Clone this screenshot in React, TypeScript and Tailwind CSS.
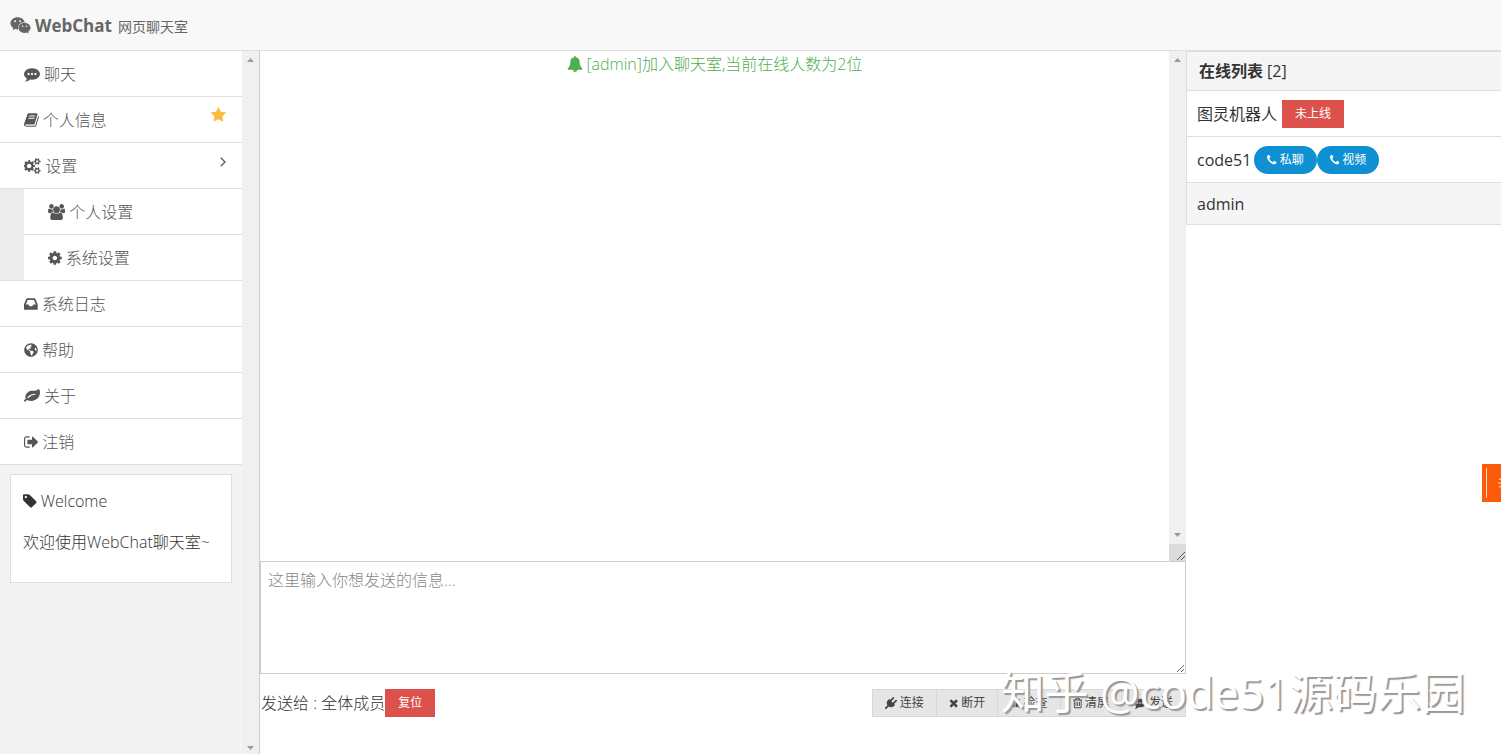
import type { ReactNode } from 'react'
import { FaWeixin, FaGlobeAmericas } from 'react-icons/fa'

type IconName =
  | 'commenting' | 'book' | 'star' | 'cogs' | 'users' | 'cog' | 'inbox' | 'leaf'
  | 'signOut' | 'tag' | 'bell' | 'phone' | 'plug' | 'times' | 'trash' | 'bug'

// [viewBox x, viewBox width, path], all on a 1792 high grid
const icons: Record<IconName, [number, number, string]> = {
  commenting: [0, 1792, 'M640 896q0-53-37.5-90.5t-90.5-37.5-90.5 37.5-37.5 90.5 37.5 90.5 90.5 37.5 90.5-37.5 37.5-90.5zm384 0q0-53-37.5-90.5t-90.5-37.5-90.5 37.5-37.5 90.5 37.5 90.5 90.5 37.5 90.5-37.5 37.5-90.5zm384 0q0-53-37.5-90.5t-90.5-37.5-90.5 37.5-37.5 90.5 37.5 90.5 90.5 37.5 90.5-37.5 37.5-90.5zm384 0q0 174-120 321.5t-326 233-450 85.5q-110 0-211-18-173 173-435 229-52 10-86 13-12 1-22-6t-13-18q-4-15 20-37 5-5 23.5-21.5t25.5-23.5 23.5-25.5 24-31.5 20.5-37 20-48 14.5-57.5 12.5-72.5q-146-90-229.5-216.5t-83.5-269.5q0-174 120-321.5t326-233 450-85.5 450 85.5 326 233 120 321.5z'],
  book: [64, 1664, 'M1703 478q40 57 18 129l-275 906q-19 64-76.5 107.5t-122.5 43.5h-923q-77 0-148.5-53.5t-99.5-131.5q-24-67-2-127 0-4 3-27t4-37q1-8-3-21.5t-3-19.5q2-11 8-21t16.5-23.5 16.5-23.5q23-38 45-91.5t30-91.5q3-10 .5-30t-.5-28q3-11 17-28t17-23q21-36 42-92t25-90q1-9-2.5-32t.5-28q4-13 22-30.5t22-22.5q19-26 42.5-84.5t27.5-96.5q1-8-3-25.5t-2-26.5q2-8 9-18t18-23 17-21q8-12 16.5-30.5t15-35 16-36 19.5-32 26.5-23.5 36-11.5 47.5 5.5l-1 3q38-9 51-9h761q74 0 114 56t18 130l-274 906q-36 119-71.5 153.5t-128.5 34.5h-869q-27 0-38 15-11 16-1 43 24 70 144 70h923q29 0 56-15.5t35-41.5l300-987q7-22 5-57 38 15 59 43zm-1064 2q-4 13 2 22.5t20 9.5h608q13 0 25.5-9.5t16.5-22.5l21-64q4-13-2-22.5t-20-9.5h-608q-13 0-25.5 9.5t-16.5 22.5zm-83 256q-4 13 2 22.5t20 9.5h608q13 0 25.5-9.5t16.5-22.5l21-64q4-13-2-22.5t-20-9.5h-608q-13 0-25.5 9.5t-16.5 22.5z'],
  star: [64, 1664, 'M1728 647q0 22-26 48l-363 354 86 500q1 7 1 20 0 21-10.5 35.5t-30.5 14.5q-19 0-40-12l-449-236-449 236q-22 12-40 12-21 0-31.5-14.5t-10.5-35.5q0-6 2-20l86-500-364-354q-25-27-25-48 0-37 56-46l502-73 225-455q19-41 49-41t49 41l225 455 502 73q56 9 56 46z'],
  cogs: [0, 1920, 'M832 896q0-106-75-181t-181-75-181 75-75 181 75 181 181 75 181-75 75-181zm768 512q0-52-38-90t-90-38-90 38-38 90q0 53 37.5 90.5t90.5 37.5 90.5-37.5 37.5-90.5zm0-1024q0-52-38-90t-90-38-90 38-38 90q0 53 37.5 90.5t90.5 37.5 90.5-37.5 37.5-90.5zm-384 421v185q0 10-7 19.5t-16 10.5l-155 24q-11 35-32 76 34 48 90 115 7 11 7 20 0 12-7 19-23 30-82.5 89.5t-78.5 59.5q-11 0-21-7l-115-90q-37 19-77 31-11 108-23 155-7 24-30 24h-186q-11 0-20-7.5t-10-17.5l-23-153q-34-10-75-31l-118 89q-7 7-20 7-11 0-21-8-144-133-144-160 0-9 7-19 10-14 41-53t47-61q-23-44-35-82l-152-24q-10-1-17-9.5t-7-19.5v-185q0-10 7-19.5t16-10.5l155-24q11-35 32-76-34-48-90-115-7-11-7-20 0-12 7-20 22-30 82-89t79-59q11 0 21 7l115 90q34-18 77-32 11-108 23-154 7-24 30-24h186q11 0 20 7.5t10 17.5l23 153q34 10 75 31l118-89q8-7 20-7 11 0 21 8 144 133 144 160 0 8-7 19-12 16-42 54t-45 60q23 48 34 82l152 23q10 2 17 10.5t7 19.5zm640 533v140q0 16-149 31-12 27-30 52 51 113 51 138 0 4-4 7-122 71-124 71-8 0-46-47t-52-68q-20 2-30 2t-30-2q-14 21-52 68t-46 47q-2 0-124-71-4-3-4-7 0-25 51-138-18-25-30-52-149-15-149-31v-140q0-16 149-31 13-29 30-52-51-113-51-138 0-4 4-7 4-2 35-20t59-34 30-16q8 0 46 46.5t52 67.5q20-2 30-2t30 2q51-71 92-112l6-2q4 0 124 70 4 3 4 7 0 25-51 138 17 23 30 52 149 15 149 31zm0-1024v140q0 16-149 31-12 27-30 52 51 113 51 138 0 4-4 7-122 71-124 71-8 0-46-47t-52-68q-20 2-30 2t-30-2q-14 21-52 68t-46 47q-2 0-124-71-4-3-4-7 0-25 51-138-18-25-30-52-149-15-149-31v-140q0-16 149-31 13-29 30-52-51-113-51-138 0-4 4-7 4-2 35-20t59-34 30-16q8 0 46 46.5t52 67.5q20-2 30-2t30 2q51-71 92-112l6-2q4 0 124 70 4 3 4 7 0 25-51 138 17 23 30 52 149 15 149 31z'],
  users: [-64, 1920, 'M529 896q-162 5-265 128h-134q-82 0-138-40.5t-56-118.5q0-353 124-353 6 0 43.5 21t97.5 42.5 119 21.5q67 0 133-23-5 37-5 66 0 139 81 256zm1071 637q0 120-73 189.5t-194 69.5h-874q-121 0-194-69.5t-73-189.5q0-53 3.5-103.5t14-109 26.5-108.5 43-97.5 62-81 85.5-53.5 111.5-20q10 0 43 21.5t73 48 107 48 135 21.5 135-21.5 107-48 73-48 43-21.5q61 0 111.5 20t85.5 53.5 62 81 43 97.5 26.5 108.5 14 109 3.5 103.5zm-1024-1277q0 106-75 181t-181 75-181-75-75-181 75-181 181-75 181 75 75 181zm704 384q0 159-112.5 271.5t-271.5 112.5-271.5-112.5-112.5-271.5 112.5-271.5 271.5-112.5 271.5 112.5 112.5 271.5zm576 225q0 78-56 118.5t-138 40.5h-134q-103-123-265-128 81-117 81-256 0-29-5-66 66 23 133 23 59 0 119-21.5t97.5-42.5 43.5-21q124 0 124 353zm-128-609q0 106-75 181t-181 75-181-75-75-181 75-181 181-75 181 75 75 181z'],
  cog: [128, 1536, 'M1152 896q0-106-75-181t-181-75-181 75-75 181 75 181 181 75 181-75 75-181zm512-109v222q0 12-8 23t-20 13l-185 28q-19 54-39 91 35 50 107 138 10 12 10 25t-9 23q-27 37-99 108t-94 71q-12 0-26-9l-138-108q-44 23-91 38-16 136-29 186-7 28-36 28h-222q-14 0-24.5-8.5t-11.5-21.5l-28-184q-49-16-90-37l-141 107q-10 9-25 9-14 0-25-11-126-114-165-168-7-10-7-23 0-12 8-23 15-21 51-66.5t54-70.5q-27-50-41-99l-183-27q-13-2-21-12.5t-8-23.5v-222q0-12 8-23t19-13l186-28q14-46 39-92-40-57-107-138-10-12-10-24 0-10 9-23 26-36 98.5-107.5t94.5-71.5q13 0 26 10l138 107q44-23 91-38 16-136 29-186 7-28 36-28h222q14 0 24.5 8.5t11.5 21.5l28 184q49 16 90 37l142-107q9-9 24-9 13 0 25 10 129 119 165 170 7 8 7 22 0 12-8 23-15 21-51 66.5t-54 70.5q26 50 41 98l183 28q13 2 21 12.5t8 23.5z'],
  inbox: [128, 1536, 'M1151 960h316q-1-3-2.5-8t-2.5-8l-212-496h-708l-212 496q-1 2-2.5 8t-2.5 8h316l95 192h320zm513 30v482q0 26-19 45t-45 19h-1408q-26 0-45-19t-19-45v-482q0-62 25-123l238-552q10-25 36.5-42t52.5-17h832q26 0 52.5 17t36.5 42l238 552q25 61 25 123z'],
  leaf: [0, 1792, 'M1280 704q0-26-19-45t-45-19q-172 0-318 49.5t-259.5 134-235.5 219.5q-19 21-19 45 0 26 19 45t45 19q24 0 45-19 27-24 74-71t67-66q137-124 268.5-176t313.5-52q26 0 45-19t19-45zm512-198q0 95-20 193-46 224-184.5 383t-357.5 268q-214 108-438 108-148 0-286-47-15-5-88-42t-96-37q-16 0-39.5 32t-45 70-52.5 70-60 32q-43 0-63.5-17.5t-45.5-59.5q-2-4-6-11t-5.5-10-3-9.5-1.5-13.5q0-35 31-73.5t68-65.5 68-56 31-48q0-4-14-38t-16-44q-9-51-9-104 0-115 43.5-220t119-184.5 170.5-139 204-95.5q55-18 145-25.5t179.5-9 178.5-6 163.5-24 113.5-56.5l29.5-29.5 29.5-28 27-20 36.5-16 43.5-4.5q39 0 70.5 46t47.5 112 24 124 8 96z'],
  signOut: [64, 1600, 'M704 1440q0 4 1 20t.5 26.5-3 23.5-10 19.5-20.5 6.5h-320q-119 0-203.5-84.5t-84.5-203.5v-704q0-119 84.5-203.5t203.5-84.5h320q13 0 22.5 9.5t9.5 22.5q0 4 1 20t.5 26.5-3 23.5-10 19.5-20.5 6.5h-320q-66 0-113 47t-47 113v704q0 66 47 113t113 47h312l11.5 1 11.5 3 8 5.5 7 9 2 13.5zm928-544q0 26-19 45l-544 544q-19 19-45 19t-45-19-19-45v-288h-448q-26 0-45-19t-19-45v-384q0-26 19-45t45-19h448v-288q0-26 19-45t45-19 45 19l544 544q19 19 19 45z'],
  tag: [128, 1536, 'M576 448q0-53-37.5-90.5t-90.5-37.5-90.5 37.5-37.5 90.5 37.5 90.5 90.5 37.5 90.5-37.5 37.5-90.5zm1067 576q0 53-37 90l-491 492q-39 37-91 37-53 0-90-37l-715-716q-38-37-64.5-101t-26.5-117v-416q0-52 38-90t90-38h416q53 0 117 26.5t102 64.5l715 714q37 39 37 91z'],
  bell: [0, 1792, 'M912 1696q0-16-16-16-59 0-101.5-42.5t-42.5-101.5q0-16-16-16t-16 16q0 73 51.5 124.5t124.5 51.5q16 0 16-16zm816-288q0 52-38 90t-90 38h-448q0 106-75 181t-181 75-181-75-75-181h-448q-52 0-90-38t-38-90q50-42 91-88t85-119.5 74.5-158.5 50-206 19.5-260q0-152 117-282.5t307-158.5q-8-19-8-39 0-40 28-68t68-28 68 28 28 68q0 20-8 39 190 28 307 158.5t117 282.5q0 139 19.5 260t50 206 74.5 158.5 85 119.5 91 88z'],
  phone: [192, 1408, 'M1600 1240q0 27-10 70.5t-21 68.5q-21 50-122 106-94 51-186 51-27 0-52.5-3.5t-57.5-12.5-47.5-14.5-55.5-20.5-49-18q-98-35-175-83-128-79-264.5-215.5t-215.5-264.5q-48-77-83-175-3-9-18-49t-20.5-55.5-14.5-47.5-12.5-57.5-3.5-52.5q0-92 51-186 56-101 106-122 25-11 68.5-21t70.5-10q14 0 21 3 18 6 53 76 11 19 30 54t35 63.5 31 53.5q3 4 17.5 25t21.5 35.5 7 28.5q0 20-28.5 50t-62 55-62 53-28.5 46q0 9 5 22.5t8.5 20.5 14 24 11.5 19q76 137 174 235t235 174q2 1 19 11.5t24 14 20.5 8.5 22.5 5q18 0 46-28.5t53-62 55-62 50-28.5q14 0 28.5 7t35.5 21.5 25 17.5q25 15 53.5 31t63.5 35 54 30q70 35 76 53 3 7 3 21z'],
  plug: [0, 1792, 'M1755 453q37 38 37 90.5t-37 90.5l-401 400 150 150-160 160q-163 163-389.5 186.5t-411.5-100.5l-362 362h-181v-181l362-362q-124-185-100.5-411.5t186.5-389.5l160-160 150 150 400-401q38-37 91-37t90 37 37 90.5-37 90.5l-400 401 234 234 401-400q38-37 91-37t90 37z'],
  times: [192, 1408, 'M1490 1322q0 40-28 68l-136 136q-28 28-68 28t-68-28l-294-294-294 294q-28 28-68 28t-68-28l-136-136q-28-28-28-68t28-68l294-294-294-294q-28-28-28-68t28-68l136-136q28-28 68-28t68 28l294 294 294-294q28-28 68-28t68 28l136 136q28 28 28 68t-28 68l-294 294 294 294q28 28 28 68z'],
  trash: [192, 1408, 'M704 736v576q0 14-9 23t-23 9h-64q-14 0-23-9t-9-23v-576q0-14 9-23t23-9h64q14 0 23 9t9 23zm256 0v576q0 14-9 23t-23 9h-64q-14 0-23-9t-9-23v-576q0-14 9-23t23-9h64q14 0 23 9t9 23zm256 0v576q0 14-9 23t-23 9h-64q-14 0-23-9t-9-23v-576q0-14 9-23t23-9h64q14 0 23 9t9 23zm128 724v-948h-896v948q0 22 7 40.5t14.5 27 10.5 8.5h832q3 0 10.5-8.5t14.5-27 7-40.5zm-672-1076h448l-48-117q-7-9-17-11h-317q-10 2-17 11zm928 32v64q0 14-9 23t-23 9h-96v948q0 83-47 143.5t-113 60.5h-832q-66 0-113-58.5t-47-141.5v-952h-96q-14 0-23-9t-9-23v-64q0-14 9-23t23-9h309l70-167q15-37 54-63t79-26h320q40 0 79 26t54 63l70 167h309q14 0 23 9t9 23z'],
  bug: [128, 1536, 'M1696 960q0 26-19 45t-45 19h-224q0 171-67 290l208 209q19 19 19 45t-19 45q-18 19-45 19t-45-19l-198-197q-5 5-15 13t-42 28.5-65 36.5-82 29-97 13v-896h-128v896q-51 0-101.5-13.5t-87-33-66-39-43.5-32.5l-15-14-183 207q-20 21-48 21-24 0-43-16-19-18-20.5-44.5t15.5-46.5l202-227q-58-114-58-274h-224q-26 0-45-19t-19-45 19-45 45-19h224v-294l-173-173q-19-19-19-45t19-45 45-19 45 19l173 173h844l173-173q19-19 45-19t45 19 19 45-19 45l-173 173v294h224q26 0 45 19t19 45zm-480-576h-640q0-133 93.5-226.5t226.5-93.5 226.5 93.5 93.5 226.5z'],
}

function Icon({ name, className = 'h-4' }: { name: IconName; className?: string }) {
  const [x, width, d] = icons[name]
  return (
    <svg viewBox={`${x} 0 ${width} 1792`} className={`w-auto flex-shrink-0 ${className}`} fill="currentColor" aria-hidden="true">
      <path d={d} />
    </svg>
  )
}

function Arrow({ down = false }: { down?: boolean }) {
  return (
    <svg viewBox="0 0 7 4" className="w-[7px] h-1 text-[#9b9b9b]" fill="currentColor" aria-hidden="true">
      <path d={down ? 'M0 0h7L3.5 4z' : 'M0 4h7L3.5 0z'} />
    </svg>
  )
}

function ScrollTrack({ className }: { className: string }) {
  return (
    <div className={`flex w-[17px] flex-1 flex-col items-center justify-between bg-[#f0f0f0] ${className}`}>
      <Arrow />
      <Arrow down />
    </div>
  )
}

function NavItem({ icon, label, extra }: { icon: ReactNode; label: string; extra?: ReactNode }) {
  return (
    <li className="border-b border-[#dedede] bg-white">
      <a href="#" className="flex h-[45px] items-center gap-1 pl-6 pr-4 text-[#555]">
        {icon}
        <span>{label}</span>
        {extra}
      </a>
    </li>
  )
}

const actions: { icon: IconName; label: string }[] = [
  { icon: 'plug', label: '连接' },
  { icon: 'times', label: '断开' },
  { icon: 'bug', label: '检查' },
  { icon: 'trash', label: '清屏' },
  { icon: 'commenting', label: '发送' },
]

export default function App() {
  return (
    <div className="relative flex h-screen flex-col overflow-hidden bg-white font-['Open_Sans','Noto_Sans_CJK_SC',sans-serif] text-base font-light text-[#333]">
      <header className="flex h-[51px] flex-shrink-0 items-center border-b border-[#dedede] bg-[#f8f8f8] px-[10px] text-[#666]">
        <FaWeixin className="mr-1 h-[21px] w-[21px]" />
        <h1 className="flex items-baseline gap-[6px] pt-px">
          <strong className="text-[17px] font-bold">WebChat</strong>
          <small className="text-sm font-normal">网页聊天室</small>
        </h1>
      </header>

      <div className="flex min-h-0 flex-1">
        <aside className="flex w-[260px] flex-shrink-0 border-r border-[#ccc] bg-[#f3f3f3]">
          <div className="flex-1">
            <nav>
              <ul>
                <NavItem icon={<Icon name="commenting" />} label="聊天" />
                <NavItem icon={<Icon name="book" />} label="个人信息" extra={<Icon name="star" className="ml-auto mb-[10px] h-4 text-[#fbbd3c]" />} />
                <NavItem
                  icon={<Icon name="cogs" />}
                  label="设置"
                  extra={
                    <svg viewBox="0 0 6 10" className="ml-auto mb-2 h-[10px] w-[6px]" fill="none" stroke="currentColor" strokeWidth="1.3" aria-hidden="true">
                      <path d="M.8.8 5 5 .8 9.2" />
                    </svg>
                  }
                />
                <li className="border-b border-[#dedede] bg-[#ececec] pl-6">
                  <ul className="-mb-px">
                    <NavItem icon={<Icon name="users" />} label="个人设置" />
                    <NavItem icon={<Icon name="cog" />} label="系统设置" />
                  </ul>
                </li>
                <NavItem icon={<Icon name="inbox" />} label="系统日志" />
                <NavItem icon={<FaGlobeAmericas className="h-[14px] w-[14px]" />} label="帮助" />
                <NavItem icon={<Icon name="leaf" />} label="关于" />
                <NavItem icon={<Icon name="signOut" />} label="注销" />
              </ul>
            </nav>
            <section className="m-[10px] mt-[9px] h-[109px] border border-[#dedede] bg-white px-3 pt-[14px]">
              <p className="flex items-center gap-1">
                <Icon name="tag" />
                Welcome
              </p>
              <p className="mt-[17px]">欢迎使用WebChat聊天室~</p>
            </section>
          </div>
          <div className="flex flex-col">
            <ScrollTrack className="pt-[7px] pb-1" />
          </div>
        </aside>

        <main className="flex min-w-0 flex-1 flex-col">
          <div className="flex min-h-0 flex-1">
            <p className="flex flex-1 items-center justify-center gap-1 self-start pt-px text-[#4fae4f]">
              <Icon name="bell" />
              [admin]加入聊天室,当前在线人数为2位
            </p>
            <div className="flex flex-col">
              <ScrollTrack className="py-[7px]" />
              <svg viewBox="0 0 17 17" className="h-[17px] w-[17px] bg-[#dcdcdc]" fill="none" stroke="#555" aria-hidden="true">
                <path d="M8 16 16 8M12 16 16 12" />
              </svg>
            </div>
          </div>
          <textarea
            aria-label="消息"
            placeholder="这里输入你想发送的信息..."
            className="block h-[113px] w-full flex-shrink-0 resize border border-[#ccc] bg-white px-[7px] py-[6px] placeholder:text-[#888]"
          />
          <div className="flex h-20 flex-shrink-0 items-start justify-between pt-[15px]">
            <div className="flex items-center pl-px">
              <span>发送给 : 全体成员</span>
              <button type="button" className="h-7 bg-[#dd514c] px-[13px] text-xs font-normal text-white">复位</button>
            </div>
            <div className="flex">
              {actions.map((a, i) => (
                <button
                  key={a.label}
                  type="button"
                  className={`flex h-7 items-center gap-[3px] border-y border-r border-[#d8d8d8] bg-[#e6e6e6] px-3 text-xs font-normal text-[#444] ${i === 0 ? 'border-l' : ''}`}
                >
                  <Icon name={a.icon} className="h-3" />
                  {a.label}
                </button>
              ))}
            </div>
          </div>
        </main>

        <aside className="w-[315px] flex-shrink-0 font-normal">
          <div className="border-b border-l border-[#dedede]">
            <h2 className="flex h-10 items-center gap-1 border-y border-[#dedede] bg-[#f5f5f5] px-3">
              <span className="font-bold">在线列表</span>
              <span className="font-normal">[2]</span>
            </h2>
            <ul>
              <li className="flex h-[46px] items-center gap-[5px] border-b border-[#dedede] px-[10px]">
                图灵机器人
                <button type="button" className="h-7 bg-[#dd514c] px-[13px] text-xs text-white">未上线</button>
              </li>
              <li className="flex h-[46px] items-center border-b border-[#dedede] px-[10px]">
                <span className="mr-[3px]">code51</span>
                <button type="button" className="flex h-7 items-center gap-[3px] rounded-full bg-[#0e90d2] px-[13px] text-xs text-white">
                  <Icon name="phone" className="h-3" />
                  私聊
                </button>
                <button type="button" className="flex h-7 items-center gap-[3px] rounded-full bg-[#0e90d2] px-[13px] text-xs text-white">
                  <Icon name="phone" className="h-3" />
                  视频
                </button>
              </li>
              <li className="flex h-[41px] items-center bg-[#f5f5f5] px-[10px]">admin</li>
            </ul>
          </div>
        </aside>
      </div>

      <div className="absolute right-0 top-[464px] flex h-[38px] w-[19px] items-center justify-between overflow-hidden bg-[#fc5b0c] pl-1 text-white">
        <span className="h-[30px] w-px bg-white/80" />
        <svg viewBox="0 0 4 18" className="h-[18px] w-[3px]" stroke="#ffe0c0" strokeWidth="1.5" aria-hidden="true">
          <path d="M1 4h3M0 9h4M1 14h3" />
        </svg>
      </div>

      <p className="pointer-events-none absolute bottom-[30px] right-9 whitespace-nowrap text-[44px] leading-[64px] font-normal text-white [text-shadow:2px_2px_1px_#999]">
        知乎 @code51源码乐园
      </p>
    </div>
  )
}
